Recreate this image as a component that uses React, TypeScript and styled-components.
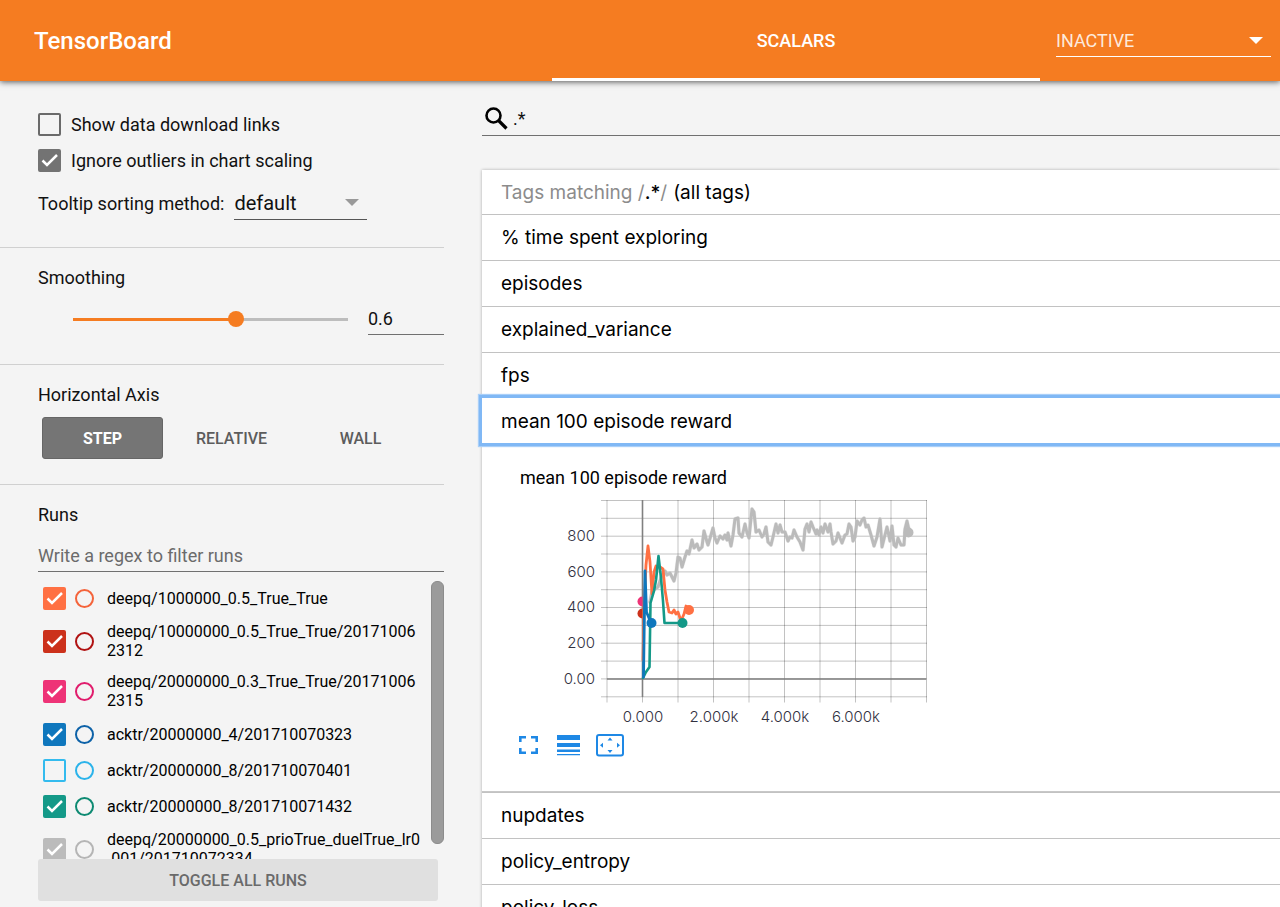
import React, { useState } from "react";
import styled, { createGlobalStyle } from "styled-components";

const GlobalStyle = createGlobalStyle`
  *, *::before, *::after { box-sizing: border-box; }
  body {
    margin: 0;
    background: #f4f4f4;
    color: #111;
    font-family: Roboto, "Liberation Sans", sans-serif;
    font-size: 18px;
  }
  button, input, select { font: inherit; color: inherit; margin: 0; }
`;

const ORANGE = "#f57c21";

const Page = styled.div`
  display: flex;
  flex-direction: column;
  height: 100vh;
  overflow: hidden;
`;

const Header = styled.header`
  display: flex;
  align-items: center;
  flex: 0 0 81px;
  padding-right: 9px;
  background: ${ORANGE};
  color: #fff;
  box-shadow: 0 1px 6px rgba(0, 0, 0, 0.65);
  z-index: 1;
`;

const Brand = styled.h1`
  flex: 0 0 552px;
  margin: 0;
  padding-left: 34px;
  font-size: 24px;
  font-weight: 500;
`;

const Tabs = styled.nav`
  display: flex;
  flex: 1;
  align-self: stretch;
`;

const Tab = styled.button`
  flex: 1;
  padding: 3px 0 0;
  border: 0;
  border-bottom: 3px solid #fff;
  background: none;
  font-weight: 500;
`;

const SelectWrap = styled.span<{ $width: number; $line: string }>`
  display: grid;
  align-items: center;
  width: ${(p) => p.$width}px;
  border-bottom: 1px solid ${(p) => p.$line};

  > * { grid-area: 1 / 1; }
  > svg { justify-self: end; margin-right: 8px; pointer-events: none; }
`;

const Select = styled.select<{ $size: number }>`
  width: 100%;
  height: 32px;
  padding: 0;
  border: 0;
  outline: 0;
  background: transparent;
  appearance: none;
  font-size: ${(p) => p.$size}px;
`;

const Inactive = styled.div`
  margin-left: 16px;
  color: rgba(255, 255, 255, 0.85);
  option { color: #111; }
`;

const Body = styled.div`
  display: flex;
  flex: 1;
  min-height: 0;
`;

const Sidebar = styled.aside`
  display: flex;
  flex-direction: column;
  flex: 0 0 444px;
  min-height: 0;
`;

const Section = styled.section`
  padding: 20px 0 0 38px;
  border-bottom: 1px solid #d0d0d0;
`;

const Options = styled(Section)`
  height: 167px;
  padding-top: 25px;
`;

const Smoothing = styled(Section)`
  height: 117px;
`;

const Axis = styled(Section)`
  height: 120px;
`;

const RunsSection = styled(Section)`
  display: flex;
  flex-direction: column;
  flex: 1;
  min-height: 0;
  padding-bottom: 6px;
  border: 0;
`;

const Heading = styled.h2`
  margin: 0;
  font-size: 18px;
  line-height: 20px;
  font-weight: 400;
`;

const CheckLabel = styled.label`
  display: flex;
  align-items: center;
  gap: 10px;
  height: 36px;
`;

const CheckCell = styled.span`
  display: grid;
  flex: none;
  > * { grid-area: 1 / 1; }
  > svg { pointer-events: none; }
`;

const CheckInput = styled.input<{ $color: string }>`
  width: 23px;
  height: 23px;
  border: 2px solid ${(p) => p.$color};
  border-radius: 2px;
  appearance: none;
  &:checked { background: ${(p) => p.$color}; }
`;

const SortRow = styled.label`
  display: flex;
  align-items: center;
  gap: 10px;
  height: 50px;
`;

const SliderRow = styled.div`
  display: flex;
  align-items: center;
  gap: 20px;
  padding: 15px 0 0 35px;
`;

const Slider = styled.input`
  flex: 1;
  min-width: 0;
  height: 16px;
  background: linear-gradient(${ORANGE}, ${ORANGE}) left center / 60% 3px no-repeat,
    linear-gradient(#bdbdbd, #bdbdbd) center / 100% 3px no-repeat;
  appearance: none;
  &::-webkit-slider-thumb {
    width: 16px;
    height: 16px;
    border-radius: 50%;
    background: ${ORANGE};
    appearance: none;
  }
`;

const TextInput = styled.input`
  width: 100%;
  height: 32px;
  padding: 0;
  border: 0;
  border-bottom: 1px solid #707070;
  outline: 0;
  background: transparent;
  &::placeholder { color: #6b6b6b; opacity: 1; }
`;

const NumberInput = styled(TextInput)`
  width: 76px;
`;

const RegexInput = styled(TextInput)`
  flex: none;
  margin-top: 15px;
`;

const AxisButtons = styled.div`
  display: flex;
  gap: 8px;
  padding: 12px 0 0 4px;
`;

const AxisButton = styled.button<{ $active?: boolean }>`
  width: 121px;
  height: 42px;
  padding: 0;
  border: ${(p) => (p.$active ? "1px solid #666" : "0")};
  border-radius: 3px;
  background: ${(p) => (p.$active ? "#757575" : "transparent")};
  color: ${(p) => (p.$active ? "#fff" : "#5c5c5c")};
  font-size: 16px;
  font-weight: ${(p) => (p.$active ? 700 : 500)};
`;

const RunsArea = styled.div`
  display: flex;
  flex: 1;
  min-height: 0;
  overflow: hidden;
`;

const RunList = styled.ul`
  flex: 1;
  margin: 0;
  padding: 8px 0 0 5px;
  list-style: none;
`;

const Thumb = styled.div`
  width: 13px;
  margin: 9px 0 15px;
  border: 1px solid #8c8c8c;
  border-radius: 6px;
  background: #9b9b9b;
`;

const Run = styled.li`
  display: flex;
  align-items: center;
  min-height: 36px;
  padding: 6px 8px 6px 0;
`;

const Isolate = styled.input<{ $color: string }>`
  flex: none;
  width: 19px;
  height: 19px;
  border: 2px solid ${(p) => p.$color};
  border-radius: 50%;
  appearance: none;
`;

const RunLabel = styled.label`
  flex: 1;
  color: #000;
  font-size: 16px;
  line-height: 19px;
  line-break: anywhere;
`;

const RunControls = styled.span`
  display: flex;
  align-items: center;
  flex: 0 0 64px;
  gap: 9px;
`;

const ToggleAll = styled.button`
  flex: 0 0 42px;
  margin-right: 6px;
  border: 0;
  border-radius: 3px;
  background: #e0e0e0;
  color: #6a6a6a;
  font-size: 16px;
  font-weight: 500;
`;

const Main = styled.main`
  flex: 1;
  min-width: 0;
  padding: 21px 0 0 38px;
  overflow: hidden;
`;

const SearchBar = styled.label`
  display: flex;
  align-items: center;
  height: 34px;
  border-bottom: 1px solid #707070;
  > svg { flex: none; }
`;

const SearchInput = styled.input`
  flex: 1;
  min-width: 0;
  padding: 0;
  border: 0;
  outline: 0;
  background: transparent;
`;

const Panes = styled.div`
  margin-top: 34px;
  background: #fff;
  box-shadow: 0 0 3px rgba(0, 0, 0, 0.3);
  font-family: Inter, "Liberation Sans", sans-serif;
  font-size: 19px;
`;

const Matching = styled.div`
  display: flex;
  align-items: center;
  gap: 6px;
  height: 44px;
  padding-left: 19px;
  color: #8c8c8c;
  b { color: #000; font-weight: 500; }
  em { color: #000; font-style: normal; }
`;

const PaneHeader = styled.button<{ $focused?: boolean }>`
  display: block;
  position: relative;
  width: 100%;
  height: 46px;
  padding: 0 0 0 19px;
  border: 0;
  border-top: 1px solid #c2c2c2;
  background: #fff;
  color: #000;
  text-align: left;
  outline: 0;
  ${(p) =>
    p.$focused &&
    `height: 45px;
     border-color: #fff;
     box-shadow: 0 0 0 3px #80b8f5, 0 0 1px 4px #a9cff8;
     z-index: 1;`}
`;

const PaneBody = styled.div`
  height: 349px;
  padding: 25px 0 0 38px;
  border-bottom: 1px solid #c8c8c8;
`;

const ChartTitle = styled.h3`
  margin: 0;
  font-family: Roboto, "Liberation Sans", sans-serif;
  font-size: 18px;
  line-height: 20px;
  font-weight: 400;
  color: #000;
`;

const ChartSvg = styled.svg`
  display: block;
  margin: 9px 0 0 40px;
  font-size: 15px;
`;

const ChartTools = styled.div`
  display: flex;
  align-items: center;
  gap: 16px;
  margin: 5px 0 0 -1px;
`;

const Tool = styled.button`
  display: grid;
  padding: 0;
  border: 0;
  background: none;
  color: #1e88e5;
`;

const Caret = ({ color }: { color: string }) => (
  <svg width="14" height="7" viewBox="0 0 14 7" aria-hidden="true">
    <path d="M0 0h14L7 7z" fill={color} />
  </svg>
);

function Checkbox({ id, color, initial }: { id: string; color: string; initial: boolean }) {
  const [on, setOn] = useState(initial);
  return (
    <CheckCell>
      <CheckInput id={id} type="checkbox" $color={color} checked={on} onChange={() => setOn(!on)} />
      {on && (
        <svg width="23" height="23" viewBox="0 0 23 23" aria-hidden="true">
          <path d="M4.500 11.500L9 16L19 6" fill="none" stroke="#fff" strokeWidth="2.500" />
        </svg>
      )}
    </CheckCell>
  );
}

const RUNS = [
  { name: "deepq/1000000_0.5_True_True", color: "#ff7043", ring: "#f4633a", on: true },
  { name: "deepq/10000000_0.5_True_True/201710062312", color: "#cc311b", ring: "#b01212", on: true },
  { name: "deepq/20000000_0.3_True_True/201710062315", color: "#ee3377", ring: "#e01c6c", on: true },
  { name: "acktr/20000000_4/201710070323", color: "#0f77bd", ring: "#0d62a8", on: true },
  { name: "acktr/20000000_8/201710070401", color: "#33bbee", ring: "#2bb3ea", on: false },
  { name: "acktr/20000000_8/201710071432", color: "#149988", ring: "#0d8a72", on: true },
  { name: "deepq/20000000_0.5_prioTrue_duelTrue_lr0.001/201710072334", color: "#bbbbbb", ring: "#b5b5b5", on: true },
];

const COLS = [607, 642.5, 678, 713.5, 749, 784.5, 820, 855.5, 891, 926.5];
const ROWS = [500.5, 518.3, 536.2, 554, 571.9, 589.7, 607.5, 625.4, 643.2, 661.1, 678.9, 696.8];

const GRAY =
  "650,602 652,591 658,587 662,575 665,571 667,575 670,573 674,581 676,573 678,557 680,558 682,567 685,557 687,551 689,554 692,540 694,548 697,544 699,550 702,547 704,531 707,542 708,545 711,535 713,528 715,538 717,543 720,536 723,539 725,535 727,540 728,533 731,546 733,535 735,519 738,518 739,533 742,537 745,524 747,533 749,538 752,509 754,512 756,532 759,530 762,537 764,534 766,527 768,542 771,545 773,537 776,524 778,533 780,525 782,532 785,532 788,541 790,537 792,538 794,530 797,537 800,542 803,550 805,529 807,524 809,532 811,522 813,527 816,534 817,530 819,535 821,527 823,533 825,524 828,532 830,524 831,532 833,544 836,541 838,533 840,538 842,543 845,535 847,534 849,524 851,527 853,541 855,537 857,521 860,525 862,520 864,518 866,527 868,525 871,535 874,546 877,537 880,519 882,547 885,535 887,527 890,541 892,526 894,545 896,547 898,538 901,545 904,545 905,529 907,521 909,530";

function Chart() {
  return (
    <ChartSvg width="370" height="230" viewBox="560 497 370 230" role="img" aria-label="mean 100 episode reward by step">
      <g stroke="#000" strokeOpacity="0.24">
        {COLS.map((x) => (
          <line key={x} x1={x} x2={x} y1="500" y2="702.5" />
        ))}
        {ROWS.map((y) => (
          <line key={y} x1="601" x2="927" y1={y} y2={y} />
        ))}
      </g>
      <path d="M642.500 500V697M607 679H926" stroke="#808080" strokeWidth="1.600" />
      <g fill="none" strokeLinejoin="round" strokeLinecap="round">
        <polyline points={GRAY} stroke="#d8d8d8" strokeWidth="4" strokeOpacity="0.400" />
        <polyline points={GRAY} stroke="#bbb" strokeWidth="3" />
        <circle cx="908.500" cy="532.500" r="5" fill="#bbb" />
        <path d="M642.500 596.500a5 5 0 0 0 0 10z" fill="#ee3377" />
        <path d="M642.500 608.500a5 5 0 0 0 0 10z" fill="#cc311b" />
        <polyline
          points="643,660 644,610 646,565 648,546 650,562 652,594 654,572 656,566 660,567 663,569 665,590 667,602 669,612 672,613 674,610 676,614 678,612 681,621 684,614 686,606 688,608"
          stroke="#ff7043"
          strokeWidth="2.800"
        />
        <circle cx="689" cy="610" r="5" fill="#ff7043" />
        <polyline
          points="643,678 646,672 649.500,667 650.500,603 654,591 656,580 658.500,556 661,578 663,601 664.500,623 682,623"
          stroke="#149988"
          strokeWidth="2.600"
        />
        <circle cx="682.500" cy="623" r="5" fill="#149988" />
        <polyline points="643.500,677 645,571 646.500,612 651,623" stroke="#0f77bd" strokeWidth="2.800" />
        <circle cx="651.500" cy="623" r="5" fill="#0f77bd" />
      </g>
      <g fill="#32313f" fontWeight="300" textAnchor="end">
        <text x="595" y="541">800</text>
        <text x="595" y="577">600</text>
        <text x="595" y="612">400</text>
        <text x="595" y="648">200</text>
        <text x="595" y="684">0.00</text>
      </g>
      <g fill="#32313f" fontWeight="300" textAnchor="middle">
        <text x="643" y="722">0.000</text>
        <text x="714" y="722">2.000k</text>
        <text x="785" y="722">4.000k</text>
        <text x="856" y="722">6.000k</text>
      </g>
    </ChartSvg>
  );
}

export default function App() {
  const [smooth, setSmooth] = useState("0.6");
  return (
    <Page>
      <GlobalStyle />
      <Header>
        <Brand>TensorBoard</Brand>
        <Tabs>
          <Tab>SCALARS</Tab>
        </Tabs>
        <Inactive>
          <SelectWrap $width={215} $line="#fff">
            <Select $size={18} aria-label="Inactive dashboards">
              <option>INACTIVE</option>
            </Select>
            <Caret color="#fff" />
          </SelectWrap>
        </Inactive>
      </Header>
      <Body>
        <Sidebar>
          <Options>
            <CheckLabel htmlFor="links">
              <Checkbox id="links" color="#6a6a6a" initial={false} />
              Show data download links
            </CheckLabel>
            <CheckLabel htmlFor="outliers">
              <Checkbox id="outliers" color="#737373" initial />
              Ignore outliers in chart scaling
            </CheckLabel>
            <SortRow>
              Tooltip sorting method:
              <SelectWrap $width={133} $line="#555">
                <Select $size={20}>
                  <option>default</option>
                </Select>
                <Caret color="#999" />
              </SelectWrap>
            </SortRow>
          </Options>
          <Smoothing>
            <Heading>Smoothing</Heading>
            <SliderRow>
              <Slider
                type="range"
                min="0"
                max="1"
                step="0.01"
                aria-label="Smoothing"
                value={smooth}
                onChange={(e) => setSmooth(e.target.value)}
              />
              <NumberInput aria-label="Smoothing value" value={smooth} onChange={(e) => setSmooth(e.target.value)} />
            </SliderRow>
          </Smoothing>
          <Axis>
            <Heading>Horizontal Axis</Heading>
            <AxisButtons>
              <AxisButton $active>STEP</AxisButton>
              <AxisButton>RELATIVE</AxisButton>
              <AxisButton>WALL</AxisButton>
            </AxisButtons>
          </Axis>
          <RunsSection>
            <Heading>Runs</Heading>
            <RegexInput aria-label="Filter runs" placeholder="Write a regex to filter runs" />
            <RunsArea>
              <RunList>
                {RUNS.map((run, i) => (
                  <Run key={run.name}>
                    <RunControls>
                      <Checkbox id={`run-${i}`} color={run.color} initial={run.on} />
                      <Isolate type="radio" name="isolate" aria-label={`Only ${run.name}`} $color={run.ring} />
                    </RunControls>
                    <RunLabel htmlFor={`run-${i}`}>{run.name}</RunLabel>
                  </Run>
                ))}
              </RunList>
              <Thumb />
            </RunsArea>
            <ToggleAll>TOGGLE ALL RUNS</ToggleAll>
          </RunsSection>
        </Sidebar>
        <Main>
          <SearchBar>
            <svg width="31" height="28" viewBox="0 0 31 28" fill="none" stroke="#000" aria-hidden="true">
              <circle cx="11.500" cy="10.500" r="7" strokeWidth="2.600" />
              <path d="M16.500 15.500L24.500 23.500" strokeWidth="3.200" />
            </svg>
            <SearchInput aria-label="Filter tags" defaultValue=".*" />
          </SearchBar>
          <Panes>
            <Matching>
              <span>
                Tags matching /<b>.*</b>/
              </span>
              <em>(all tags)</em>
            </Matching>
            <PaneHeader>% time spent exploring</PaneHeader>
            <PaneHeader>episodes</PaneHeader>
            <PaneHeader>explained_variance</PaneHeader>
            <PaneHeader>fps</PaneHeader>
            <PaneHeader $focused>mean 100 episode reward</PaneHeader>
            <PaneBody>
              <ChartTitle>mean 100 episode reward</ChartTitle>
              <Chart />
              <ChartTools>
                <Tool aria-label="Expand chart">
                  <svg width="22" height="26" viewBox="0 0 22 26" fill="none" stroke="currentColor" strokeWidth="2.600">
                    <path d="M1.300 10V5.300H7M12 5.300H17.700V10M17.700 16V20.700H12M7 20.700H1.300V16" />
                  </svg>
                </Tool>
                <Tool aria-label="Toggle log scale">
                  <svg width="23" height="26" viewBox="0 0 23 26" fill="currentColor">
                    <path d="M0 3h23v5H0zM0 11h23v4H0zM0 17.500h23v2.500H0zM0 22h23v1.200H0z" />
                  </svg>
                </Tool>
                <Tool aria-label="Fit domain to data">
                  <svg width="28" height="26" viewBox="0 0 28 26" fill="currentColor">
                    <rect x="1" y="3" width="26" height="20.500" rx="2" fill="none" stroke="currentColor" strokeWidth="2" />
                    <path d="M14 5.500l2.500 3h-5zM14 21l2.500-3h-5zM4 13.200l3-2.500v5zM24 13.200l-3-2.500v5z" />
                  </svg>
                </Tool>
              </ChartTools>
            </PaneBody>
            <PaneHeader>nupdates</PaneHeader>
            <PaneHeader>policy_entropy</PaneHeader>
            <PaneHeader>policy_loss</PaneHeader>
          </Panes>
        </Main>
      </Body>
    </Page>
  );
}
